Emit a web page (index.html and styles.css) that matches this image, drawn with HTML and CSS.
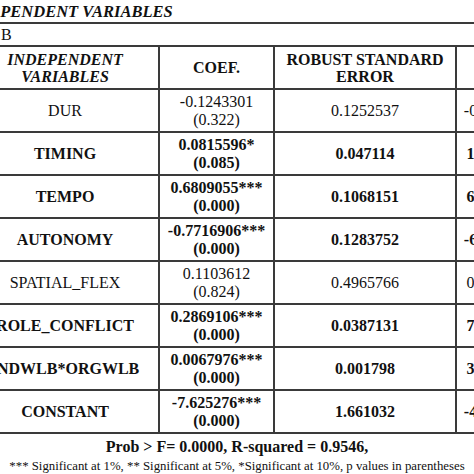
FILE: index.html
```html
<!DOCTYPE html>
<html>
<head>
<meta charset="utf-8">
<link rel="stylesheet" href="styles.css">
</head>
<body>
<div class="page">
  <div class="title">INDEPENDENT VARIABLES</div>
  <table class="reg">
    <colgroup>
      <col class="c1"><col class="c2"><col class="c3"><col class="c4">
    </colgroup>
    <tr class="cap"><td colspan="4">B</td></tr>
    <tr class="head">
      <th class="var">INDEPENDENT<br>VARIABLES</th>
      <th>COEF.</th>
      <th>ROBUST STANDARD<br>ERROR</th>
      <th>Z</th>
    </tr>
    <tr><td>DUR</td><td>-0.1243301<br>(0.322)</td><td>0.1252537</td><td>-0.99</td></tr>
    <tr class="b"><td>TIMING</td><td>0.0815596*<br>(0.085)</td><td>0.047114</td><td>1.73</td></tr>
    <tr class="b"><td>TEMPO</td><td>0.6809055***<br>(0.000)</td><td>0.1068151</td><td>6.37</td></tr>
    <tr class="b"><td>AUTONOMY</td><td>-0.7716906***<br>(0.000)</td><td>0.1283752</td><td>-6.01</td></tr>
    <tr><td>SPATIAL_FLEX</td><td>0.1103612<br>(0.824)</td><td>0.4965766</td><td>0.22</td></tr>
    <tr class="b"><td>ROLE_CONFLICT</td><td>0.2869106***<br>(0.000)</td><td>0.0387131</td><td>7.41</td></tr>
    <tr class="b"><td>INDWLB*ORGWLB</td><td>0.0067976***<br>(0.000)</td><td>0.001798</td><td>3.78</td></tr>
    <tr class="b"><td>CONSTANT</td><td>-7.625276***<br>(0.000)</td><td>1.661032</td><td>-4.59</td></tr>
  </table>
  <div class="prob">Prob &gt; F= 0.0000, R-squared = 0.9546,</div>
  <div class="note">*** Significant at 1%, ** Significant at 5%, *Significant at 10%, p values in parentheses</div>
</div>
</body>
</html>
```
FILE: styles.css
```css
html, body {
  margin: 0;
  padding: 0;
  background: #fff;
  overflow: hidden;
}
body {
  width: 474px;
  height: 474px;
  font-family: "Liberation Serif", "Times New Roman", serif;
  color: #111;
}
.page {
  width: 534px;
  margin-left: -30px;
}
.title {
  height: 22px;
  line-height: 24px;
  font-size: 16.5px;
  font-weight: bold;
  font-style: italic;
  margin-left: -11px;
  white-space: nowrap;
}
.reg {
  width: 534px;
  border-collapse: collapse;
  table-layout: fixed;
  font-size: 16px;
  line-height: 18px;
}
.c1 { width: 188px; }
.c2 { width: 115px; }
.c3 { width: 182px; }
.c4 { width: 49px; }
.reg td, .reg th {
  border: 2px solid #3a3a3a;
  text-align: center;
  vertical-align: middle;
  padding: 0;
  white-space: nowrap;
  overflow: hidden;
}
.reg tr { height: 43px; }
.reg tr.cap { height: 23px; }
.reg tr.cap td {
  text-align: left;
  padding-left: 30px;
  border-left: none;
  border-right: none;
}
.reg tr.head { height: 43px; }
.reg th {
  font-weight: bold;
  line-height: 17px;
}
.reg th.var { font-style: italic; }
.reg tr.b td { font-weight: bold; }
.prob {
  padding-top: 3px;
  line-height: 20px;
  font-size: 16px;
  font-weight: bold;
  text-align: center;
}
.note {
  line-height: 16px;
  font-size: 12.8px;
  text-align: center;
  margin-top: 1px;
}
```
